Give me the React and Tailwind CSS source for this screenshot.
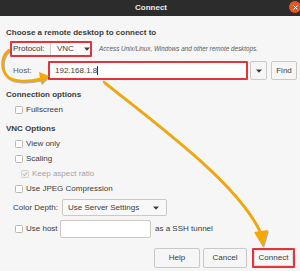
import React from 'react';

function Caret({ className = '' }) {
  return (
    <svg width="6" height="4" viewBox="0 0 6 4" className={className}>
      <path d="M0 0.5 L6 0.5 L3 3.8 Z" fill="#3c3c3c" />
    </svg>
  );
}

function Check({ checked, disabled, className = '' }) {
  return (
    <span
      className={`flex items-center justify-center w-[8px] h-[8px] rounded-[1.5px] border ${
        disabled ? 'border-[#d6d2ce] bg-[#f2f2f2]' : 'border-[#bdb7b2] bg-white'
      } ${className}`}
    >
      {checked && (
        <svg width="6" height="6" viewBox="0 0 6 6">
          <path d="M1 3.2 L2.4 4.6 L5 1.4" fill="none" stroke="#9a9a9a" strokeWidth="0.9" />
        </svg>
      )}
    </span>
  );
}

function CheckRow({ label, checked, disabled, indent }) {
  return (
    <div className={`flex items-center h-[15px] ${indent ? 'ml-[21px]' : 'ml-[15px]'}`}>
      <Check checked={checked} disabled={disabled} />
      <span className={`ml-[3px] ${disabled ? 'text-[#a3a3a3]' : ''}`}>{label}</span>
    </div>
  );
}

function Button({ children, className = '' }) {
  return (
    <div
      className={`flex items-center justify-center h-full rounded-[2px] border border-[#cdc8c3] bg-[#f6f6f6] ${className}`}
    >
      {children}
    </div>
  );
}

function Arrows() {
  const a1 = 'M 9 50 C 1 56, 0 70, 8 77 C 14 82, 28 82, 40 79';
  const a2 = 'M 104 82 C 160 127, 240 185, 261 234';
  return (
    <svg
      width="300"
      height="271"
      viewBox="0 0 300 271"
      className="absolute left-0 top-0 pointer-events-none"
    >
      <g transform="translate(1 1.2)" opacity="0.35">
        <path d={a1} fill="none" stroke="#333" strokeWidth="2.6" />
        <path d={a2} fill="none" stroke="#333" strokeWidth="2.6" />
        <polygon points="49,76 39,72 41,84" fill="#333" />
        <polygon points="254,232 268,230 263,247" fill="#333" />
      </g>
      <path d={a1} fill="none" stroke="#f6a800" strokeWidth="2.6" strokeLinecap="round" />
      <path d={a2} fill="none" stroke="#f6a800" strokeWidth="2.6" strokeLinecap="round" />
      <polygon points="49,76 39,72 41,84" fill="#f6a800" />
      <polygon points="254,232 268,230 263,247" fill="#f6a800" />
    </svg>
  );
}

export default function App() {
  return (
    <div className="relative w-[300px] h-[271px] overflow-hidden bg-[#f6f6f6] text-[#3c3c3c] text-[8px] leading-[10px] font-['Liberation_Sans',Arial,sans-serif]">
      {/* title bar */}
      <div className="relative flex items-center justify-center h-[16px] bg-[#2c2c2c]">
        <span className="font-bold text-[#ececec] ml-[2px]">Connect</span>
        <span className="absolute right-[-1px] top-[1px] flex items-center justify-center w-[12px] h-[12px] rounded-full bg-[#e9541f]">
          <svg width="5" height="5" viewBox="0 0 5 5">
            <path d="M0.5 0.5 L4.5 4.5 M4.5 0.5 L0.5 4.5" stroke="#fff" strokeWidth="1" />
          </svg>
        </span>
      </div>

      <div className="flex flex-col">
        <div className="mt-[12px] ml-[6px] h-[10px] font-bold">Choose a remote desktop to connect to</div>

        {/* protocol */}
        <div className="flex items-center mt-[3px] h-[16px]">
          <div className="ml-[10px] flex items-center w-[82px] h-[16px] border-2 border-[#e3343d] rounded-[1px] bg-[#f6f6f6]">
            <span className="ml-[1px] w-[37px]">Protocol:</span>
            <div className="flex items-center flex-1 h-full bg-white border-l border-[#d2cdc8]">
              <span className="ml-[6px]">VNC</span>
              <Caret className="ml-[10px]" />
            </div>
          </div>
          <span className="ml-[7px] italic text-[6.3px] text-[#5a5a5a]">
            Access Unix/Linux, Windows and other remote desktops.
          </span>
        </div>

        {/* host */}
        <div className="flex items-center mt-[4px] h-[19px]">
          <span className="ml-[13px] w-[35px] text-[#5a5a5a]">Host:</span>
          <div className="flex items-center w-[200px] h-full border-2 border-[#e3343d] rounded-[1px] bg-white">
            <span className="ml-[5px]">192.168.1.8</span>
            <span className="w-px h-[9px] bg-[#333]" />
          </div>
          <Button className="ml-[2px] w-[17px]">
            <Caret />
          </Button>
          <Button className="ml-[4px] w-[26px]">Find</Button>
        </div>

        <div className="mt-[10px] ml-[6px] h-[10px] font-bold">Connection options</div>
        <div className="mt-[2px]">
          <CheckRow label="Fullscreen" />
        </div>

        <div className="mt-[7px] ml-[6px] h-[10px] font-bold">VNC Options</div>
        <div className="mt-[2px] flex flex-col">
          <CheckRow label="View only" />
          <CheckRow label="Scaling" />
          <CheckRow label="Keep aspect ratio" checked disabled indent />
          <CheckRow label="Use JPEG Compression" />
        </div>

        {/* color depth */}
        <div className="flex items-center mt-[3px] h-[17px]">
          <span className="ml-[13px] w-[49px]">Color Depth:</span>
          <div className="flex items-center w-[105px] h-full rounded-[2px] border border-[#cdc8c3] bg-[#f8f8f8]">
            <span className="ml-[5px]">Use Server Settings</span>
            <Caret className="ml-auto mr-[7px]" />
          </div>
        </div>

        {/* use host */}
        <div className="flex items-center mt-[4px] h-[18px]">
          <span className="ml-[15px] flex items-center">
            <Check />
          </span>
          <span className="ml-[3px] w-[34px]">Use host</span>
          <div className="w-[91px] h-full rounded-[2px] border border-[#cdc8c3] bg-white" />
          <span className="ml-[4px]">as a SSH tunnel</span>
        </div>

        {/* buttons */}
        <div className="flex items-center justify-end mt-[10px] h-[20px] pr-[5px]">
          <Button className="w-[46px]">Help</Button>
          <Button className="ml-[3px] w-[44px]">Cancel</Button>
          <div className="ml-[5px] w-[43px] h-full border-2 border-[#e3343d] rounded-[1px]">
            <Button className="border-[#ddd]">Connect</Button>
          </div>
        </div>
      </div>

      <Arrows />
    </div>
  );
}
